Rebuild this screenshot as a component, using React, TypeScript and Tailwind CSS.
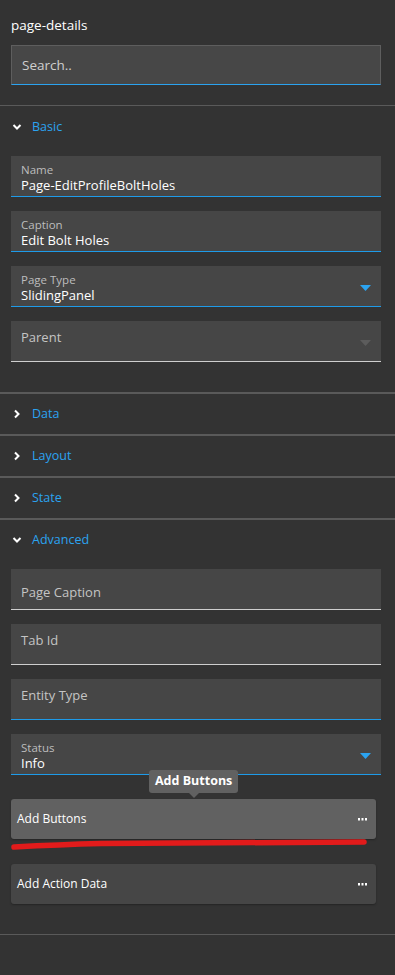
import React from 'react';

const font = { fontFamily: '"Open Sans", "Noto Sans", sans-serif' };

const ChevronDown = () => (
  <svg width="10" height="8" viewBox="0 0 10 8" className="shrink-0">
    <polyline points="1.5,2 5,5.5 8.5,2" fill="none" stroke="#ffffff" strokeWidth="2" />
  </svg>
);

const ChevronRight = () => (
  <svg width="10" height="10" viewBox="0 0 10 10" className="shrink-0">
    <polyline points="3,1.5 6.5,5 3,8.5" fill="none" stroke="#ffffff" strokeWidth="2" />
  </svg>
);

const Caret = ({ active }: { active: boolean }) => (
  <svg width="11" height="6" viewBox="0 0 11 6" className="shrink-0">
    <polygon points="0,0 11,0 5.5,6" fill={active ? '#2ba3f0' : '#5c5c5c'} />
  </svg>
);

const Dots = () => (
  <svg width="9" height="3" viewBox="0 0 9 3" className="shrink-0">
    <rect x="0" y="0" width="2" height="2.5" fill="#fff" />
    <rect x="3.5" y="0" width="2" height="2.5" fill="#fff" />
    <rect x="7" y="0" width="2" height="2.5" fill="#fff" />
  </svg>
);

const SectionHeader = ({ title, open, tall }: { title: string; open: boolean; tall?: boolean }) => (
  <div className={`flex items-center ${tall ? 'h-[42px]' : 'h-[40px]'} pl-[12px] gap-[10px]`}>
    {open ? <ChevronDown /> : <ChevronRight />}
    <span className="text-[12.5px] text-[#2ba3f0]">{title}</span>
  </div>
);

type FieldProps = { label: string; value?: string; select?: boolean; active?: boolean; low?: boolean };

const Field = ({ label, value, select, active, low }: FieldProps) => (
  <div
    className={`h-[41px] bg-[#464646] border-b ${active ? 'border-[#1e9be9]' : 'border-[#cfcfcf]'} flex items-center pl-[10px] pr-[10px]`}
  >
    {value ? (
      <div className="flex flex-col flex-1 self-start pt-[7px]">
        <span className="text-[11.5px] text-[#bdbdbd] leading-[14px]">{label}</span>
        <span className="text-[13px] text-white leading-[16px]">{value}</span>
      </div>
    ) : (
      <div className={`flex-1 self-start ${low ? 'pt-[10px]' : 'pt-[3px]'}`}>
        <span className="text-[13px] text-[#c4c4c4] leading-[20px]">{label}</span>
      </div>
    )}
    {select && (
      <div className="pt-[4px]">
        <Caret active={!!active} />
      </div>
    )}
  </div>
);

const ActionButton = ({ label, hover }: { label: string; hover?: boolean }) => (
  <div
    className={`h-[40px] rounded-[3px] ${hover ? 'bg-[#616161]' : 'bg-[#464646]'} flex items-center justify-between pl-[6px] pr-[9px] shadow-[0_1px_2px_rgba(0,0,0,0.3)]`}
  >
    <span className="text-[12px] text-white">{label}</span>
    <Dots />
  </div>
);

export default function App() {
  return (
    <div className="w-[395px] h-[975px] bg-[#333333] text-white overflow-hidden" style={font}>
      <div className="pl-[11px] pr-[14px] pt-[14px] pb-[20px]">
        <div className="text-[13.5px] text-white h-[22px] leading-[22px]">page-details</div>
        <div className="mt-[9px] h-[40px] bg-[#474747] border border-[#5e5e5e] border-b-[#2ba3f0] flex items-center pl-[10px]">
          <span className="text-[13.5px] text-[#cfcfcf]">Search..</span>
        </div>
      </div>

      <div className="border-t border-[#5a5a5a]">
        <SectionHeader title="Basic" open tall />
        <div className="pl-[11px] pr-[14px] pt-[8px] pb-[30px] flex flex-col gap-[14px]">
          <Field label="Name" value="Page-EditProfileBoltHoles" active />
          <Field label="Caption" value="Edit Bolt Holes" active />
          <Field label="Page Type" value="SlidingPanel" select active />
          <Field label="Parent" select />
        </div>
      </div>

      <div className="border-t-2 border-[#5a5a5a]">
        <SectionHeader title="Data" open={false} />
      </div>
      <div className="border-t-2 border-[#5a5a5a]">
        <SectionHeader title="Layout" open={false} />
      </div>
      <div className="border-t-2 border-[#5a5a5a]">
        <SectionHeader title="State" open={false} />
      </div>
      <div className="border-t-2 border-[#5a5a5a]">
        <SectionHeader title="Advanced" open />
        <div className="pl-[11px] pr-[14px] pt-[9px] flex flex-col gap-[14px]">
          <Field label="Page Caption" low />
          <Field label="Tab Id" />
          <Field label="Entity Type" active />
          <Field label="Status" value="Info" select active />
        </div>
        <div className="relative pl-[11px] pr-[19px] pt-[24px] pb-[30px]">
          <div className="absolute left-[149px] top-[-5px] z-10 flex flex-col items-center">
            <div className="h-[23px] px-[6px] rounded-[3px] bg-[#616161] flex items-center">
              <span className="text-[12.5px] font-bold text-white">Add Buttons</span>
            </div>
            <div className="w-0 h-0 border-l-[5px] border-r-[5px] border-t-[5px] border-l-transparent border-r-transparent border-t-[#616161]" />
          </div>
          <ActionButton label="Add Buttons" hover />
          <svg width="365" height="25" viewBox="0 0 365 25" className="block">
            <path d="M3 8 C 40 6, 70 5, 90 4.5 L 353 3" fill="none" stroke="#e21b1b" strokeWidth="5.5" strokeLinecap="round" />
          </svg>
          <ActionButton label="Add Action Data" />
        </div>
      </div>
      <div className="border-t border-[#5a5a5a]" />
    </div>
  );
}
